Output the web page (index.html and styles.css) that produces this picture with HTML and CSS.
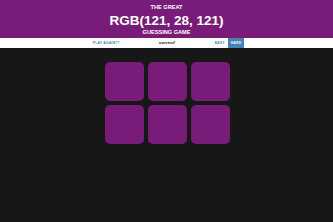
FILE: index.html
```html
<!DOCTYPE html>
<html lang="en">
<head>
  <meta charset="UTF-8" />
  <title>Colour Game</title>
  <link rel="stylesheet" href="styles.css">
</head>
<body>

  <h1 class="header">
    <span class="small">The Great</span>
    <span id="colorDisplay" class="big">RGB(121, 28, 121)</span>
    <span class="small">Guessing Game</span>
  </h1>

  <div class="stripe">
    <button id="reset" class="play">Play Again??</button>
    <span id="message" class="message">correct!</span>
    <button class="mode">Easy</button>
    <button class="mode selected">Hard</button>
  </div>

  <div class="container">
    <div class="square"></div>
    <div class="square"></div>
    <div class="square"></div>
    <div class="square"></div>
    <div class="square"></div>
    <div class="square"></div>
  </div>

</body>
</html>
```

FILE: styles.css
```css
body {
  margin: 0;
  background: #171717;
  font-family: "Liberation Sans", Arial, sans-serif;
}

.header {
  margin: 0;
  padding: 4px 0 1px;
  background: rgb(121, 28, 121);
  color: white;
  text-align: center;
  text-transform: uppercase;
  font-weight: 700;
}

.header span {
  display: block;
}

.small {
  font-size: 5.6px;
  line-height: 7px;
}

.header .small:last-child {
  line-height: 9px;
}

.big {
  font-size: 13.5px;
  line-height: 17px;
  padding-top: 1px;
  margin-bottom: -1px;
}

.stripe {
  display: flex;
  justify-content: center;
  align-items: stretch;
  height: 10px;
  background: white;
  padding-left: 1px;
}

.stripe button {
  border: none;
  background: none;
  margin: 0;
  padding: 0 3px;
  font-family: inherit;
  font-size: 3.4px;
  font-weight: 700;
  letter-spacing: 0.2px;
  text-transform: uppercase;
  color: steelblue;
  height: 100%;
  outline: none;
}

.stripe .selected {
  color: white;
  background: steelblue;
}

.message {
  width: 89px;
  font-size: 4.4px;
  font-weight: 700;
  color: #222;
  text-align: center;
  line-height: 10px;
}

.container {
  display: grid;
  grid-template-columns: repeat(3, 39px);
  grid-auto-rows: 39px;
  gap: 4px;
  justify-content: center;
  margin-top: 14px;
  padding-left: 1px;
}

.square {
  background: rgb(121, 28, 121);
  border-radius: 5px;
}
```
